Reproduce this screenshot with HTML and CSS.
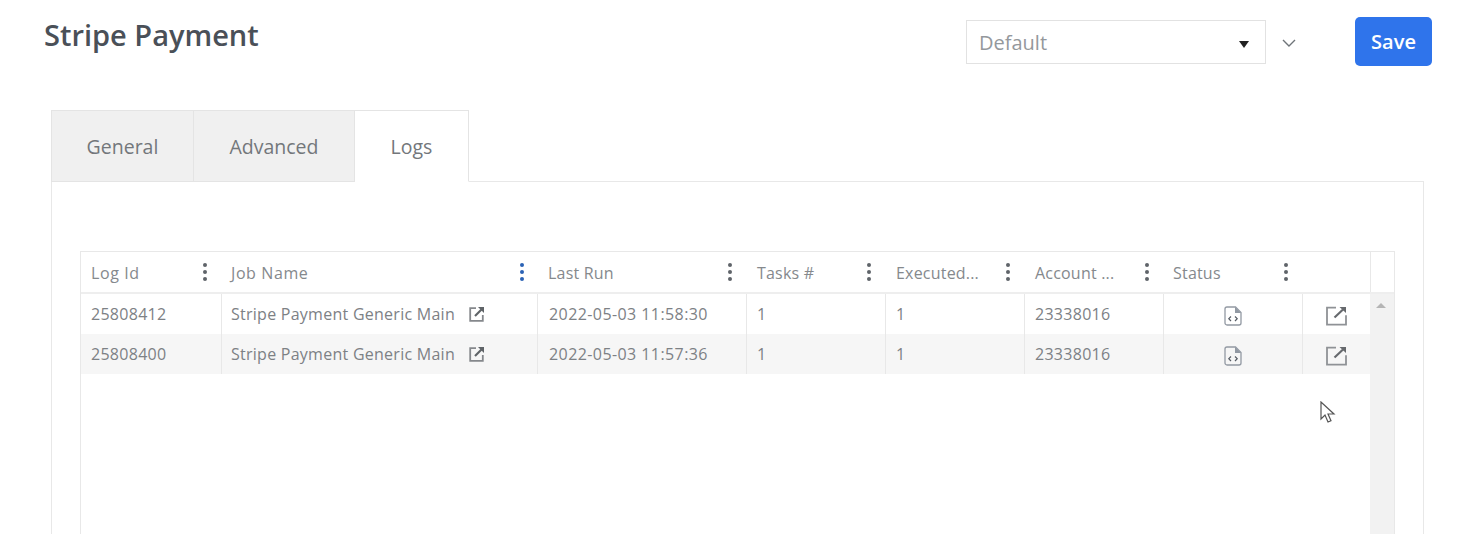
FILE: index.html
```html
<!DOCTYPE html>
<html lang="en">
<head>
<meta charset="utf-8">
<title>Stripe Payment</title>
<link rel="stylesheet" href="styles.css">
</head>
<body>
<svg class="defs" width="0" height="0" aria-hidden="true">
  <symbol id="i-ext" viewBox="0 0 16 16">
    <path d="M7 2.200H1.200v12.600h12.600V9" fill="none" stroke="#85888c" stroke-width="1.800"/>
    <path d="M6 10 13 3" fill="none" stroke="#5f6367" stroke-width="2.200"/>
    <path d="M9 1h6v6z" fill="#5f6367"/>
  </symbol>
  <symbol id="i-ext-lg" viewBox="0 0 21 20">
    <path d="M10 1.700H1v17h19v-9.500" fill="none" stroke="#8f9296" stroke-width="1.800"/>
    <path d="M8.500 11.500 17 3.500" fill="none" stroke="#66696d" stroke-width="2.200"/>
    <path d="M13.500 1H20v6z" fill="#66696d"/>
  </symbol>
  <symbol id="i-code" viewBox="0 0 18 20">
    <path d="M3 1h8.500L17 6.500V17a2 2 0 0 1-2 2H3a2 2 0 0 1-2-2V3a2 2 0 0 1 2-2z" fill="none" stroke="currentColor" stroke-width="1.300"/>
    <path d="M11 1v6h6" fill="currentColor"/>
    <path d="M7 10.500 4.800 12.700 7 15M11 10.500l2.200 2.200L11 15" fill="none" stroke="#555b63" stroke-width="1.200"/>
  </symbol>
</svg>
<header class="topbar">
  <h1 class="title">Stripe Payment</h1>
  <div class="actions">
    <div class="select"><span>Default</span><i class="caret"></i></div>
    <svg class="chevron" viewBox="0 0 14 8" width="14" height="8"><path d="M1 1l6 6 6-6" fill="none" stroke="#6f7479" stroke-width="1.400"/></svg>
    <button class="save" type="button">Save</button>
  </div>
</header>
<main class="content">
  <nav class="tabs">
    <div class="tab tab-general">General</div>
    <div class="tab tab-advanced">Advanced</div>
    <div class="tab tab-logs active">Logs</div>
  </nav>
  <section class="panel">
    <div class="grid">
      <div class="grid-head">
        <div class="hcell hcell-first"><span>Log Id</span><i class="dots"></i></div>
        <div class="hcell hcell-job"><span>Job Name</span><i class="dots blue"></i></div>
        <div class="hcell"><span>Last Run</span><i class="dots"></i></div>
        <div class="hcell"><span>Tasks #</span><i class="dots"></i></div>
        <div class="hcell"><span>Executed...</span><i class="dots"></i></div>
        <div class="hcell"><span>Account ...</span><i class="dots"></i></div>
        <div class="hcell hcell-status"><span>Status</span><i class="dots"></i></div>
        <div class="hcell"></div>
        <div class="hcell corner"></div>
      </div>
      <div class="grid-body">
        <div class="rows">
          <div class="row">
            <div class="cell">25808412</div>
            <div class="cell cell-job">Stripe Payment Generic Main<svg class="ic-ext"><use href="#i-ext"/></svg></div>
            <div class="cell cell-date">2022-05-03 11:58:30</div>
            <div class="cell">1</div>
            <div class="cell">1</div>
            <div class="cell">23338016</div>
            <div class="cell center"><svg class="ic-code"><use href="#i-code"/></svg></div>
            <div class="cell center"><svg class="ic-ext-lg"><use href="#i-ext-lg"/></svg></div>
          </div>
          <div class="row alt">
            <div class="cell">25808400</div>
            <div class="cell cell-job">Stripe Payment Generic Main<svg class="ic-ext"><use href="#i-ext"/></svg></div>
            <div class="cell cell-date">2022-05-03 11:57:36</div>
            <div class="cell">1</div>
            <div class="cell">1</div>
            <div class="cell">23338016</div>
            <div class="cell center"><svg class="ic-code"><use href="#i-code"/></svg></div>
            <div class="cell center"><svg class="ic-ext-lg"><use href="#i-ext-lg"/></svg></div>
          </div>
        </div>
        <div class="scrollbar"><i class="up"></i></div>
      </div>
    </div>
  </section>
</main>
<svg class="cursor" viewBox="0 0 16 23" width="16" height="23"><path d="M1 1v17l4-4 3 7 3-1.300-3-6.700h6z" fill="#fff" stroke="#555" stroke-width="1.200"/></svg>
</body>
</html>
```
FILE: styles.css
```css
* { box-sizing: border-box; }
body {
  margin: 0;
  height: 534px;
  overflow: hidden;
  position: relative;
  background: #fff;
  font-family: "Open Sans", "Noto Sans", "Liberation Sans", sans-serif;
  color: #6f7479;
}
.defs { display: block; height: 0; }
.topbar {
  display: flex;
  justify-content: space-between;
  align-items: flex-start;
  height: 110px;
  padding: 17px 42px 0 44px;
}
.title {
  margin: -1px 0 0;
  font-size: 29px;
  line-height: 37px;
  font-weight: 600;
  color: #4a5058;
}
.actions { display: flex; align-items: flex-start; height: 49px; }
.select {
  width: 300px;
  height: 44px;
  margin-top: 3px;
  padding: 0 16px 0 12px;
  display: flex;
  align-items: center;
  justify-content: space-between;
  border: 1px solid #e2e2e2;
  font-size: 20px;
  color: #94989c;
}
.caret {
  width: 0;
  height: 0;
  margin-top: 5px;
  border-left: 5px solid transparent;
  border-right: 5px solid transparent;
  border-top: 7px solid #222;
}
.chevron { margin: 22px 59px 0 16px; }
.save {
  width: 77px;
  height: 49px;
  border: 0;
  border-radius: 5px;
  background: #2f74eb;
  color: #fff;
  font: 600 20px "Open Sans", "Noto Sans", sans-serif;
  padding: 0;
}
.content { padding: 0 50px 0 51px; }
.tabs { display: flex; height: 72px; position: relative; z-index: 1; }
.tab {
  display: flex;
  align-items: center;
  justify-content: center;
  height: 72px;
  font-size: 19.500px;
  background: #f0f0f0;
  color: #73777b;
  border: 1px solid #e4e4e4;
  border-left-width: 0;
}
.tab-general { width: 143px; border-left-width: 1px; }
.tab-advanced { width: 161px; }
.tab-logs { width: 114px; }
.tab.active { background: #fff; border-bottom-color: #fff; }
.panel {
  margin-top: -1px;
  height: 353px;
  padding: 69px 28px 0;
  border: 1px solid #e8e8e8;
  border-bottom: 0;
}
.grid {
  border: 1px solid #e8e8e8;
  border-bottom: 0;
  height: 283px;
  display: flex;
  flex-direction: column;
}
.row {
  display: grid;
  grid-template-columns: 140px 316px 209px 139px 139px 139px 139px 68px;
}
.grid-head {
  display: grid;
  grid-template-columns: 140px 316px 209px 139px 139px 139px 139px 68px 1fr;
  height: 42px;
  border-bottom: 2px solid #eeeeee;
}
.hcell {
  display: flex;
  align-items: center;
  justify-content: space-between;
  padding: 2px 14px 0 11px;
  font-size: 16px;
  letter-spacing: .2px;
  color: #85898d;
  white-space: nowrap;
}
.hcell-first { padding-left: 10px; letter-spacing: .6px; }
.hcell-job { padding: 2px 13px 0 10px; letter-spacing: .6px; }
.hcell-status { padding-left: 10px; }
.hcell .dots { margin-top: -2px; }
.corner { border-left: 1px solid #e8e8e8; }
.dots, .dots::before, .dots::after {
  display: block;
  width: 4px;
  height: 4px;
  border-radius: 50%;
  background: #5f6469;
}
.dots { position: relative; }
.dots::before, .dots::after { content: ""; position: absolute; left: 0; }
.dots::before { top: -7px; }
.dots::after { top: 7px; }
.dots.blue, .dots.blue::before, .dots.blue::after { background: #2b62b5; }
.grid-body { flex: 1; display: flex; min-height: 0; }
.rows { width: 1289px; }
.row { height: 40px; }
.row.alt { background: #f6f6f6; }
.cell {
  display: flex;
  align-items: center;
  padding: 0 10px;
  font-size: 16px;
  letter-spacing: .28px;
  color: #7d8185;
  border-left: 1px solid #e8e8e8;
  white-space: nowrap;
}
.cell:first-child { border-left: 0; }
.cell-job { padding-left: 9px; letter-spacing: .26px; }
.cell-date { padding-left: 11px; letter-spacing: .42px; }
.center { justify-content: center; padding: 4px 0 0; }
.ic-ext { width: 16px; height: 16px; margin-left: 14px; }
.ic-ext-lg { width: 21px; height: 20px; }
.ic-code { width: 18px; height: 20px; color: #9299a3; }
.scrollbar { flex: 1; background: #f2f2f2; display: flex; justify-content: center; padding: 9px 2px 0 0; }
.up {
  width: 0;
  height: 0;
  border-left: 5px solid transparent;
  border-right: 5px solid transparent;
  border-bottom: 5px solid #b5b5b5;
}
.cursor { position: absolute; left: 1320px; top: 401px; }
```
